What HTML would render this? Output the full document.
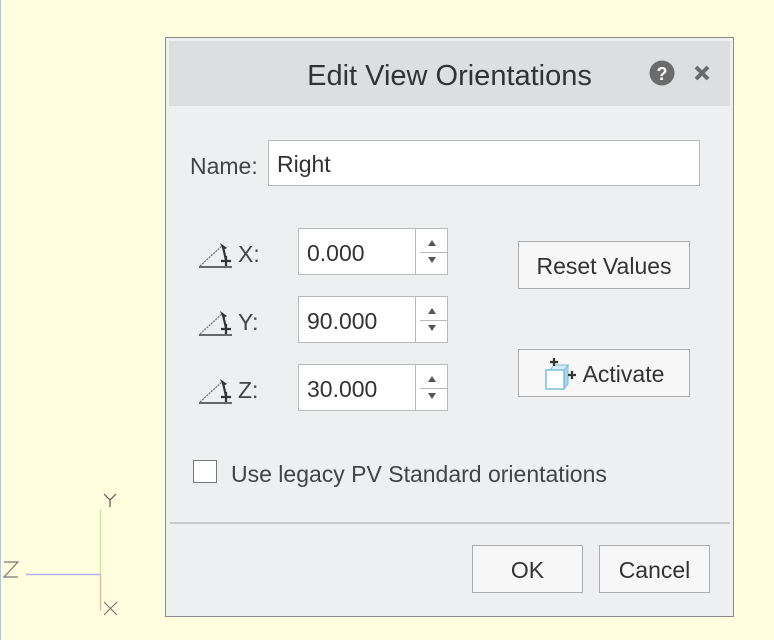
<!DOCTYPE html>
<html><head><style>
body{margin:0;width:774px;height:640px;background:#ffffe0;position:relative;overflow:hidden;font-family:"Liberation Sans","DejaVu Sans",sans-serif;color:#333}
.a{position:absolute}
.dlg{left:165px;top:37px;width:567px;height:578px;border:1px solid #8a8a8a;background:#eeeff1}
.title{left:169px;top:41px;width:561px;height:65px;background:#dcdedf}
.inp{background:#fff;border:1px solid #b9b9b9;box-sizing:border-box;font-size:23px;padding-left:8px;padding-top:3px;display:flex;align-items:center}
.btn{background:#f7f7f7;border:1px solid #adadad;box-sizing:border-box;font-size:23px;padding-top:3px;display:flex;align-items:center;justify-content:center;color:#333}
.lbl{font-size:23px;color:#444}
.spin{position:absolute;right:0;top:0;width:31px;height:100%;border-left:1px solid #b9b9b9}
.spin:after{content:"";position:absolute;left:4px;right:0;top:50%;border-top:1px solid #b9b9b9}
.up,.dn{position:absolute;left:12px;width:0;height:0;border-left:4px solid transparent;border-right:4px solid transparent}
.up{top:11px;border-bottom:6px solid #555}
.dn{bottom:11px;border-top:6px solid #555}
</style></head><body>
<div class="a" style="left:0;top:0;width:1px;height:640px;background:#a8c4ff"></div>
<div class="a dlg"></div>
<div class="a title"></div>
<div class="a" style="left:169px;top:60px;width:561px;text-align:center;font-size:29px;color:#333;padding-left:0">Edit View Orientations</div>
<svg class="a" style="left:648px;top:60px" width="66" height="28">
<circle cx="14" cy="13" r="12.5" fill="#6b6b6b"/>
<text x="14" y="20" font-size="18" font-weight="bold" fill="#fff" text-anchor="middle" font-family="Liberation Sans">?</text>
<path d="M48 7 L60 19 M60 7 L48 19" stroke="#6b6b6b" stroke-width="4"/>
</svg>
<div class="a lbl" style="left:190px;top:153px">Name:</div>
<div class="a inp" style="left:268px;top:140px;width:432px;height:46px">Right</div>

<svg width="0" height="0"><defs><g id="ang"><path d="M1 29 L34 29" stroke="#555" stroke-width="1.8"/><path d="M2 28 L25 7" stroke="#777" stroke-width="1.3" stroke-dasharray="2 1"/><path d="M22 5 L29 10 L25 12 Z" fill="#333"/><path d="M25 9 L28 22" stroke="#333" stroke-width="2.2"/><path d="M23 23 L33 23 M28 18 L28 28" stroke="#333" stroke-width="2.2"/></g></defs></svg>
<svg class="a" style="left:198px;top:238px" width="36" height="32"><use href="#ang"/></svg>
<svg class="a" style="left:198px;top:306px" width="36" height="32"><use href="#ang"/></svg>
<svg class="a" style="left:198px;top:374px" width="36" height="32"><use href="#ang"/></svg>
<div class="a lbl" style="left:238px;top:241px">X:</div>
<div class="a lbl" style="left:238px;top:309px">Y:</div>
<div class="a lbl" style="left:238px;top:377px">Z:</div>
<div class="a inp" style="left:298px;top:228px;width:150px;height:47px">0.000<div class="spin"><div class="up"></div><div class="dn"></div></div></div>
<div class="a inp" style="left:298px;top:296px;width:150px;height:47px">90.000<div class="spin"><div class="up"></div><div class="dn"></div></div></div>
<div class="a inp" style="left:298px;top:364px;width:150px;height:47px">30.000<div class="spin"><div class="up"></div><div class="dn"></div></div></div>
<div class="a btn" style="left:518px;top:241px;width:172px;height:48px">Reset Values</div>
<div class="a btn" style="left:518px;top:349px;width:172px;height:48px"><svg width="36" height="36" style="margin-right:3px;margin-top:-3px"><path d="M6 15 L10 10 L24 10 L20 15 Z" fill="#d8eef8" stroke="#7ac0dc"/><path d="M20 15 L24 10 L24 29 L20 34 Z" fill="#a8d8ea" stroke="#7ac0dc"/><rect x="2" y="15" width="18" height="19" fill="#fff" stroke="#7ac0dc" stroke-width="1.5"/><path d="M10 3 L10 11 M6 7 L14 7 M24 20 L32 20 M28 16 L28 24" stroke="#333" stroke-width="2.2"/></svg>Activate</div>
<div class="a" style="left:193px;top:460px;width:24px;height:23px;border:1.5px solid #777;background:#fff;box-sizing:border-box"></div>
<div class="a lbl" style="left:231px;top:461px">Use legacy PV Standard orientations</div>
<div class="a" style="left:170px;top:522px;width:560px;height:2px;background:#c8c8c8"></div>
<div class="a btn" style="left:472px;top:545px;width:111px;height:48px">OK</div>
<div class="a btn" style="left:599px;top:545px;width:111px;height:48px">Cancel</div>
<svg class="a" style="left:0;top:490px" width="130" height="130">
<path d="M100.5 19 L100.5 84" stroke="#b8f0a0" stroke-width="1.5"/>
<path d="M26 84.5 L100 84.5" stroke="#b0b0f0" stroke-width="1.5"/>
<path d="M100.5 84 L100.5 121" stroke="#f4b0a0" stroke-width="1.5"/>
<path d="M104 4 L110 10 L116 4 M110 10 L110 17" stroke="#555" stroke-width="1.2" fill="none"/>
<path d="M4 72 L18 72 L4 87 L18 87" stroke="#777" stroke-width="1.2" fill="none"/>
<path d="M104 112 L117 125 M117 112 L104 125" stroke="#777" stroke-width="1.2"/>
</svg>
</body></html>
